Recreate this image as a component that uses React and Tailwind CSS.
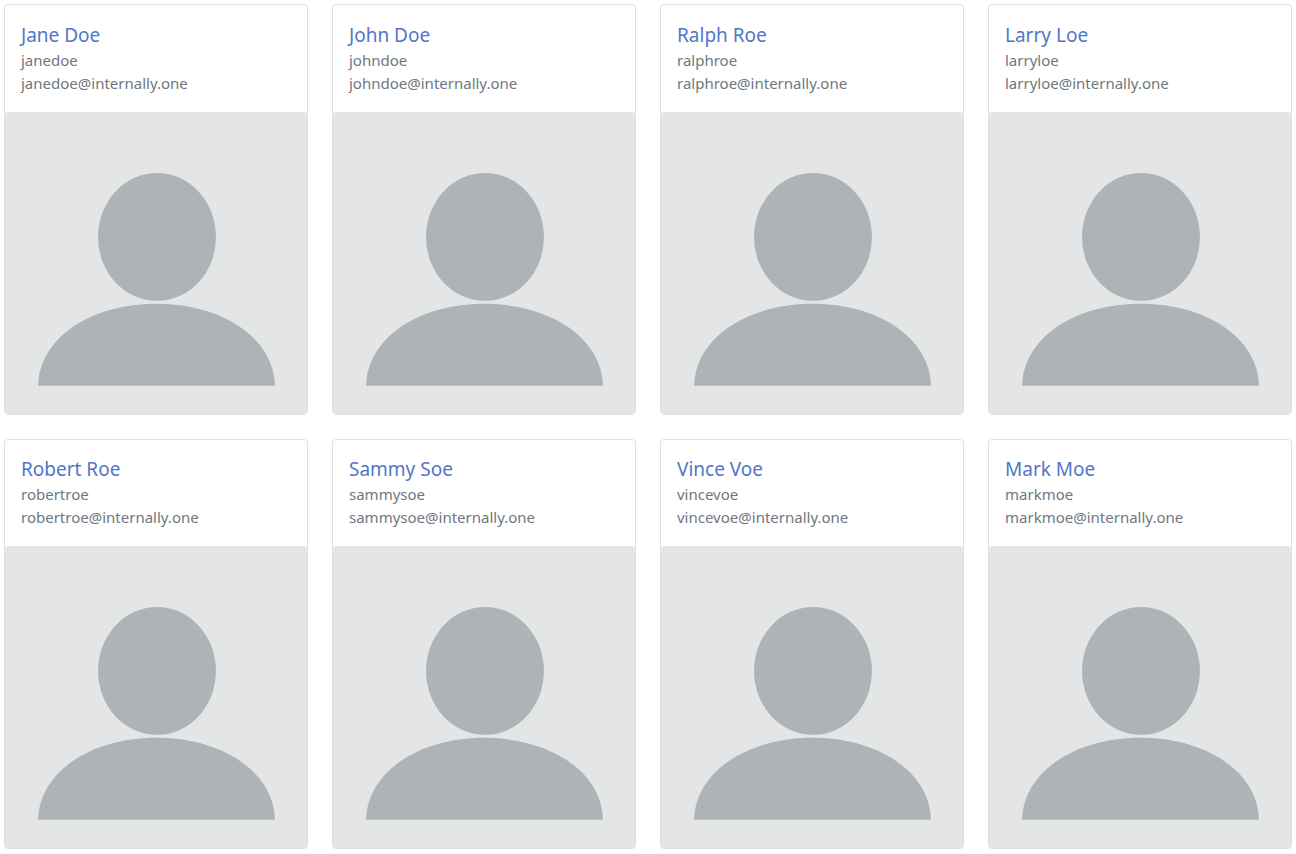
const users = [
  { name: "Jane Doe", username: "janedoe" },
  { name: "John Doe", username: "johndoe" },
  { name: "Ralph Roe", username: "ralphroe" },
  { name: "Larry Loe", username: "larryloe" },
  { name: "Robert Roe", username: "robertroe" },
  { name: "Sammy Soe", username: "sammysoe" },
  { name: "Vince Voe", username: "vincevoe" },
  { name: "Mark Moe", username: "markmoe" },
];

function Avatar() {
  return (
    <svg viewBox="0 0 302 302" className="block w-[302px] h-[301.8px] rounded-[3px] bg-[#e4e5e7]">
      <ellipse cx="152" cy="125" rx="59" ry="64" fill="#aeb3b6" />
      <path d="M33 274 C34 226 86 192 151.500 192 C217 192 269 226 270 274 Z" fill="#aeb3b6" />
    </svg>
  );
}

function UserCard({ user }) {
  return (
    <div className="w-[304px] border border-[#e0e0e0] rounded-[4px] bg-white">
      <div className="h-[106.4px] px-4 pt-[17.6px]">
        <div className="text-[19px] leading-[24px] mb-0.5 text-[#5176c8]">{user.name}</div>
        <div className="text-[15px] leading-[23px] text-[#6f7780]">{user.username}</div>
        <div className="text-[15px] leading-[23px] text-[#6f7780]">{user.username}@internally.one</div>
      </div>
      <Avatar />
    </div>
  );
}

export default function App() {
  return (
    <div className="grid grid-cols-[repeat(4,304px)] gap-x-6 gap-y-[24px] pt-[4.4px] px-1 bg-white min-h-screen content-start font-['Noto_Sans',sans-serif]">
      {users.map((user) => (
        <UserCard key={user.username} user={user} />
      ))}
    </div>
  );
}
